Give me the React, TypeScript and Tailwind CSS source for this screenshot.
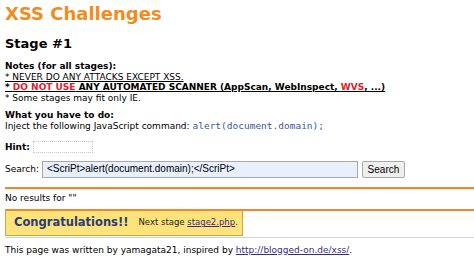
import React from 'react';

const font = { fontFamily: '"DejaVu Sans", Verdana, sans-serif' };
const arial = { fontFamily: '"Liberation Sans", Arial, sans-serif' };

export default function App() {
    return (
        <div className="w-[474px] h-[268px] bg-white text-[9px] leading-[10.5px] text-black overflow-hidden" style={font}>
            <div className="px-[5px] pt-[3px]">
                <h1 className="text-[18px] leading-[22px] font-bold text-[#f28c1c]">XSS Challenges</h1>
                <h2 className="mt-[11px] text-[13px] leading-[16px] font-bold">Stage #1</h2>
                <div className="mt-[9px]">
                    <div className="font-bold">Notes (for all stages):</div>
                    <div className="underline">* NEVER DO ANY ATTACKS EXCEPT XSS.</div>
                    <div className="underline font-bold">
                        * <span className="text-[#e0202a]">DO NOT USE</span> ANY AUTOMATED SCANNER (AppScan, WebInspect, <span className="text-[#e0202a]">WVS</span>, ...)
                    </div>
                    <div>* Some stages may fit only IE.</div>
                </div>
                <div className="mt-[7px]">
                    <div className="font-bold">What you have to do:</div>
                    <div>
                        Inject the following JavaScript command: <code className="text-[#3b5998] text-[9.5px]" style={{ fontFamily: '"DejaVu Sans Mono", monospace' }}>alert(document.domain);</code>
                    </div>
                </div>
                <div className="mt-[10px] flex items-center gap-[3px]">
                    <span className="font-bold">Hint:</span>
                    <span className="w-[60px] h-[12px] border border-dotted border-[#c8c8c8]"></span>
                </div>
                <div className="mt-[8px] flex items-center">
                    <span>Search:</span>
                    <div className="ml-[3px] w-[316px] h-[17px] border border-[#a9a9a9] bg-[#e8f0fe] px-[4px] flex items-center text-[10px]" style={arial}>
                        &lt;ScriPt&gt;alert(document.domain);&lt;/ScriPt&gt;
                    </div>
                    <button className="ml-[4px] w-[43px] h-[17px] border border-[#a9a9a9] rounded-[2px] bg-[#efefef] text-[10px] leading-[15px]" style={arial}>Search</button>
                </div>
            </div>
            <div className="ml-[5px] mt-[9px] border-t-2 border-[#ec8a2f] border-b border-b-[#e8e8e8]"></div>
            <div className="px-[5px] pt-[3px] pb-[5px]">No results for ""</div>
            <div className="ml-[5px] border-t-2 border-[#ec8a2f]">
                <div className="flex border-b border-[#d4d4d4] pb-[1px]">
                    <div className="w-[238px] h-[25px] bg-[#fde37a] border border-[#c9a84b] border-t-0 flex items-center px-[8px] gap-[10px] whitespace-nowrap">
                        <span className="text-[11.5px] font-bold text-[#2a3a7a]">Congratulations!!</span>
                        <span className="text-[8.5px] text-[#222]">Next stage <a className="underline text-[#3b2a8a]">stage2.php</a>.</span>
                    </div>
                </div>
            </div>
            <div className="px-[5px] pt-[7px]">
                This page was written by yamagata21, inspired by <a className="underline text-[#3b2a8a]">http://blogged-on.de/xss/</a>.
            </div>
        </div>
    );
}
